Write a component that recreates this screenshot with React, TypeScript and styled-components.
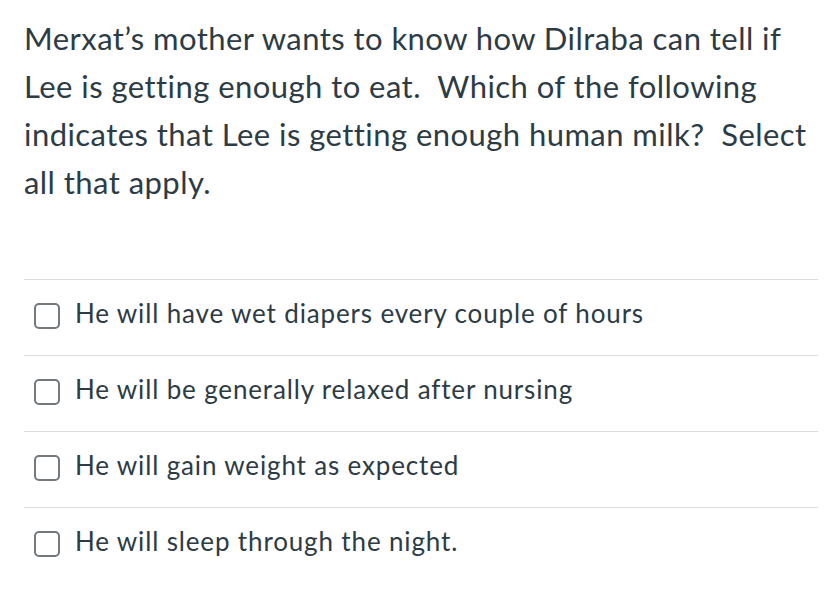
import React from "react";
import styled, { createGlobalStyle } from "styled-components";

const Global = createGlobalStyle`
  body {
    margin: 0;
    background: #fff;
    font-family: Lato, "Noto Sans", sans-serif;
    color: #2d3b45;
  }
`;

const Page = styled.div`
  width: 840px;
  height: 614px;
  overflow: hidden;
`;

const Question = styled.p`
  margin: 0;
  padding: 14px 20px 0 24px;
  font-size: 31px;
  line-height: 48px;
  letter-spacing: 0.45px;
`;

const Answers = styled.div`
  margin: 73px 22px 0 24px;
`;

const Row = styled.label`
  display: flex;
  align-items: flex-start;
  padding: 15px 0 24px 10px;
  border-top: 1px solid #dcdcdc;
`;

const Box = styled.span`
  flex: none;
  box-sizing: border-box;
  width: 26px;
  height: 26px;
  margin-top: 8px;
  margin-right: 15px;
  border: 2px solid #73787d;
  border-radius: 5px;
  background: #fff;
`;

const AnswerText = styled.span`
  font-size: 26px;
  line-height: 36px;
  letter-spacing: 0.85px;
`;

const answers = [
  "He will have wet diapers every couple of hours",
  "He will be generally relaxed after nursing",
  "He will gain weight as expected",
  "He will sleep through the night.",
];

export default function App() {
  return (
    <Page>
      <Global />
      <Question>
        Merxat’s mother wants to know how Dilraba can tell if Lee is getting
        enough to eat.&nbsp; Which of the following indicates that Lee is
        getting enough human milk?&nbsp; Select all that apply.
      </Question>
      <Answers>
        {answers.map((a) => (
          <Row key={a}>
            <Box />
            <AnswerText>{a}</AnswerText>
          </Row>
        ))}
      </Answers>
    </Page>
  );
}
